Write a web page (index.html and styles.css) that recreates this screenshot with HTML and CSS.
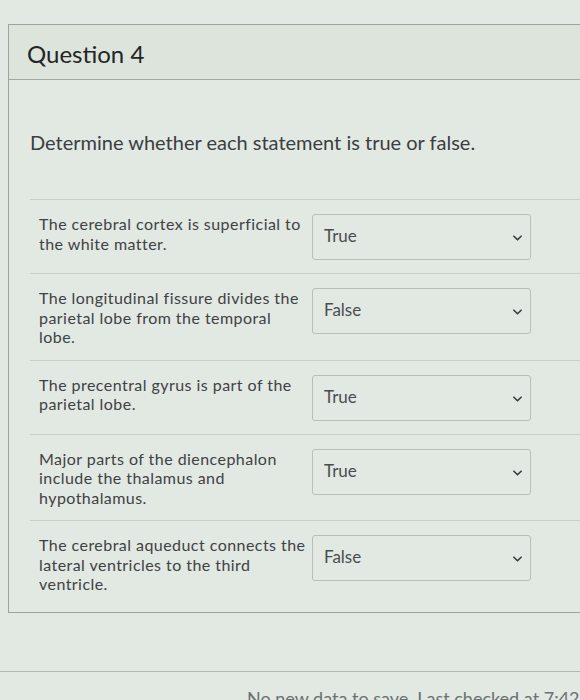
FILE: index.html
```html
<!DOCTYPE html>
<html>
<head>
<meta charset="utf-8">
<link rel="stylesheet" href="styles.css">
</head>
<body>
<div class="page">
  <div class="card">
    <div class="card-head"><h2 class="title">Question 4</h2></div>
    <div class="card-body">
      <p class="prompt">Determine whether each statement is true or false.</p>
      <div class="rows">
        <div class="row">
          <div class="label">The cerebral cortex is superficial to<br>the white matter.</div>
          <div class="select"><span>True</span><svg class="chev" viewBox="0 0 10 6" width="9" height="6"><path d="M1 1 L5 5 L9 1" fill="none" stroke="#3a3d3f" stroke-width="1.8" stroke-linecap="round" stroke-linejoin="round"/></svg></div>
        </div>
        <div class="row">
          <div class="label">The longitudinal fissure divides the<br>parietal lobe from the temporal<br>lobe.</div>
          <div class="select"><span>False</span><svg class="chev" viewBox="0 0 10 6" width="9" height="6"><path d="M1 1 L5 5 L9 1" fill="none" stroke="#3a3d3f" stroke-width="1.8" stroke-linecap="round" stroke-linejoin="round"/></svg></div>
        </div>
        <div class="row">
          <div class="label">The precentral gyrus is part of the<br>parietal lobe.</div>
          <div class="select"><span>True</span><svg class="chev" viewBox="0 0 10 6" width="9" height="6"><path d="M1 1 L5 5 L9 1" fill="none" stroke="#3a3d3f" stroke-width="1.8" stroke-linecap="round" stroke-linejoin="round"/></svg></div>
        </div>
        <div class="row">
          <div class="label">Major parts of the diencephalon<br>include the thalamus and<br>hypothalamus.</div>
          <div class="select"><span>True</span><svg class="chev" viewBox="0 0 10 6" width="9" height="6"><path d="M1 1 L5 5 L9 1" fill="none" stroke="#3a3d3f" stroke-width="1.8" stroke-linecap="round" stroke-linejoin="round"/></svg></div>
        </div>
        <div class="row last">
          <div class="label">The cerebral aqueduct connects the<br>lateral ventricles to the third<br>ventricle.</div>
          <div class="select"><span>False</span><svg class="chev" viewBox="0 0 10 6" width="9" height="6"><path d="M1 1 L5 5 L9 1" fill="none" stroke="#3a3d3f" stroke-width="1.8" stroke-linecap="round" stroke-linejoin="round"/></svg></div>
        </div>
      </div>
    </div>
  </div>
  <div class="footer">
    <p class="status">No new data to save. Last checked at 7:42 PM</p>
  </div>
</div>
</body>
</html>
```
FILE: styles.css
```css
html, body {
  margin: 0;
  padding: 0;
  background: #e2e8e2;
  overflow: hidden;
  height: 700px;
}
.page {
  font-family: Lato, "Liberation Sans", sans-serif;
  padding-top: 24px;
  width: 580px;
}
.card {
  margin-left: 8px;
  margin-right: -20px;
  border: 1px solid #9ea39e;
  border-right: none;
  height: 589px;
  box-sizing: border-box;
}
.card-head {
  height: 55px;
  box-sizing: border-box;
  border-bottom: 1px solid #a3a8a3;
  background: #dde4dc;
  display: flex;
  align-items: center;
  padding-left: 18px;
}
.title {
  margin: 0;
  font-size: 24px;
  font-weight: 400;
  color: #232527;
  padding-top: 2px;
}
.card-body {
  padding-left: 21px;
}
.prompt {
  margin: 0;
  padding-top: 50px;
  font-size: 20px;
  line-height: 24px;
  color: #3b3e40;
}
.rows {
  margin-top: 45px;
  border-top: 1px solid #c9cec9;
}
.row {
  display: grid;
  grid-template-columns: 273px 219px;
  align-items: start;
  padding: 14px 0 13px 9px;
  border-bottom: 1px solid #c9cec9;
}
.row.last {
  border-bottom: none;
}
.label {
  font-size: 16px;
  letter-spacing: 0.45px;
  line-height: 19.5px;
  color: #3f4244;
}
.select {
  height: 46px;
  box-sizing: border-box;
  border: 1px solid #b9beb9;
  border-radius: 3px;
  display: flex;
  align-items: center;
  justify-content: space-between;
  padding: 0 8px 0 11px;
  font-size: 17px;
  color: #4a4d4f;
}
.select span {
  margin-top: -3px;
}
.chev {
  display: block;
  margin-top: 2px;
}
.footer {
  margin-top: 58px;
  border-top: 1px solid #b3b8b3;
  padding-left: 247px;
}
.status {
  margin: 0;
  padding-top: 15px;
  font-size: 18px;
  color: #6b7073;
  white-space: nowrap;
}
```
